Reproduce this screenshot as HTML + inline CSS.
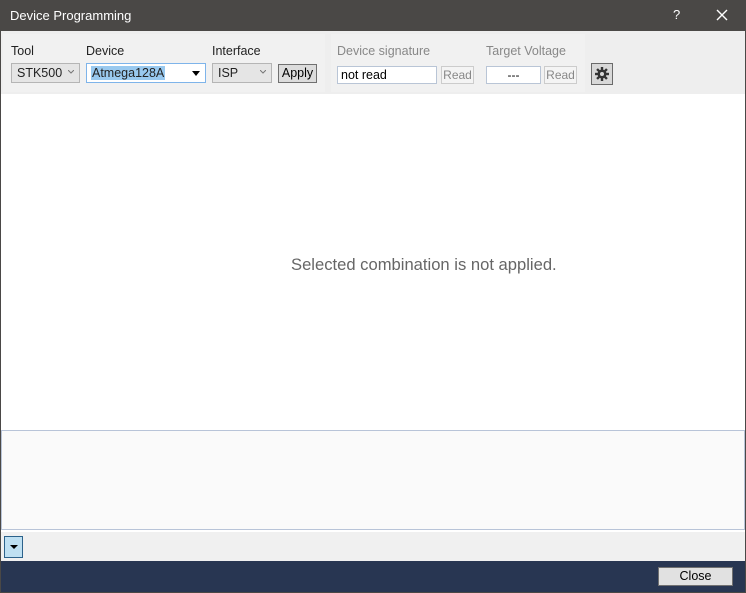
<!DOCTYPE html>
<html><head><meta charset="utf-8"><style>
*{box-sizing:border-box;margin:0;padding:0}
body{width:746px;height:593px;overflow:hidden;font-family:"Liberation Sans",sans-serif;font-size:12px;background:#4a4846;position:relative}
div,span{position:absolute}
.lbl{font-size:12.5px;color:#222}
.g{color:#888}
.box{border:1px solid #b5b5b5;background:#e5e5e5;height:20px;font-size:12.5px;padding:2px 5px;color:#222}
.btn{border:1px solid #adadad;background:#e1e1e1;height:19px;font-size:12px;text-align:center;line-height:17px}
</style></head><body>
<div style="left:10px;top:8px;color:#fff;font-size:13px">Device Programming</div>
<div style="left:673px;top:7px;color:#fff;font-size:13px">?</div>
<svg style="position:absolute;left:716px;top:9px" width="12" height="12"><path d="M1 1L11 11M11 1L1 11" stroke="#fff" stroke-width="1.4"/></svg>
<div style="left:1px;top:31px;width:744px;height:561px;background:#fff"></div>
<div style="left:1px;top:31px;width:744px;height:63px;background:#eeeeee"></div>
<div style="left:3px;top:34px;width:322px;height:58px;background:#f1f1f1"></div>
<div style="left:331px;top:34px;width:254px;height:58px;background:#f1f1f1"></div>
<div class="lbl" style="left:11px;top:44px">Tool</div>
<div class="lbl" style="left:86px;top:44px">Device</div>
<div class="lbl" style="left:212px;top:44px">Interface</div>
<div class="lbl g" style="left:337px;top:44px">Device signature</div>
<div class="lbl g" style="left:486px;top:44px">Target Voltage</div>
<div class="box" style="left:11px;top:63px;width:69px">STK500<svg style="position:absolute;right:5px;top:6px" width="6" height="4"><path d="M0 0L3 3L6 0" stroke="#777" fill="none"/></svg></div>
<div style="left:86px;top:63px;width:120px;height:20px;border:1px solid #7eb4ea;background:#fff"><span style="left:4px;top:2px;background:#99c9ef;padding:0 1px;color:#222;font-size:12.5px">Atmega128A</span><span style="right:5px;top:7px;width:0;height:0;border-left:4px solid transparent;border-right:4px solid transparent;border-top:5px solid #000"></span></div>
<div class="box" style="left:212px;top:63px;width:60px">ISP<svg style="position:absolute;right:5px;top:6px" width="6" height="4"><path d="M0 0L3 3L6 0" stroke="#777" fill="none"/></svg></div>
<div class="btn" style="left:278px;top:64px;width:39px;border-color:#707070;background:#dcdcdc;font-size:12.5px">Apply</div>
<div style="left:337px;top:66px;width:100px;height:18px;border:1px solid #b9c5d6;background:#fff;padding:1px 3px;color:#000;font-size:12.5px">not read</div>
<div class="btn g" style="left:441px;top:66px;width:33px;height:18px;border-color:#ccc;background:#f4f4f4">Read</div>
<div style="left:486px;top:66px;width:55px;height:18px;border:1px solid #b9c5d6;background:#fff;text-align:center;line-height:16px">---</div>
<div class="btn g" style="left:544px;top:66px;width:33px;height:18px;border-color:#ccc;background:#f4f4f4">Read</div>
<div style="left:591px;top:63px;width:22px;height:22px;border:1px solid #6a6a6a;background:#d8d8d8"></div>
<svg style="position:absolute;left:595px;top:67px" width="14" height="14" viewBox="0 0 14 14"><g fill="#333"><circle cx="7" cy="7" r="4.5"/><rect x="5.8" y="0" width="2.4" height="14"/><rect x="0" y="5.8" width="14" height="2.4"/><rect x="5.8" y="0" width="2.4" height="14" transform="rotate(45 7 7)"/><rect x="5.8" y="0" width="2.4" height="14" transform="rotate(-45 7 7)"/></g><circle cx="7" cy="7" r="2" fill="#d8d8d8"/></svg>
<div style="left:291px;top:255px;font-size:16.6px;color:#666">Selected combination is not applied.</div>
<div style="left:1px;top:430px;width:744px;height:100px;background:#fafafa;border:1px solid #b8c4d8"></div>
<div style="left:1px;top:532px;width:744px;height:29px;background:#f0f0f0"></div>
<div style="left:4px;top:536px;width:19px;height:22px;background:#bfe0f2;border:1px solid #2c628b"><span style="left:5px;top:8px;width:0;height:0;border-left:4px solid transparent;border-right:4px solid transparent;border-top:4px solid #000"></span></div>
<div style="left:1px;top:561px;width:744px;height:31px;background:#283652"></div>
<div class="btn" style="left:658px;top:567px;width:75px;height:19px;border-color:#707070;background:#e1e1e1;font-size:12.5px">Close</div>
</body></html>
